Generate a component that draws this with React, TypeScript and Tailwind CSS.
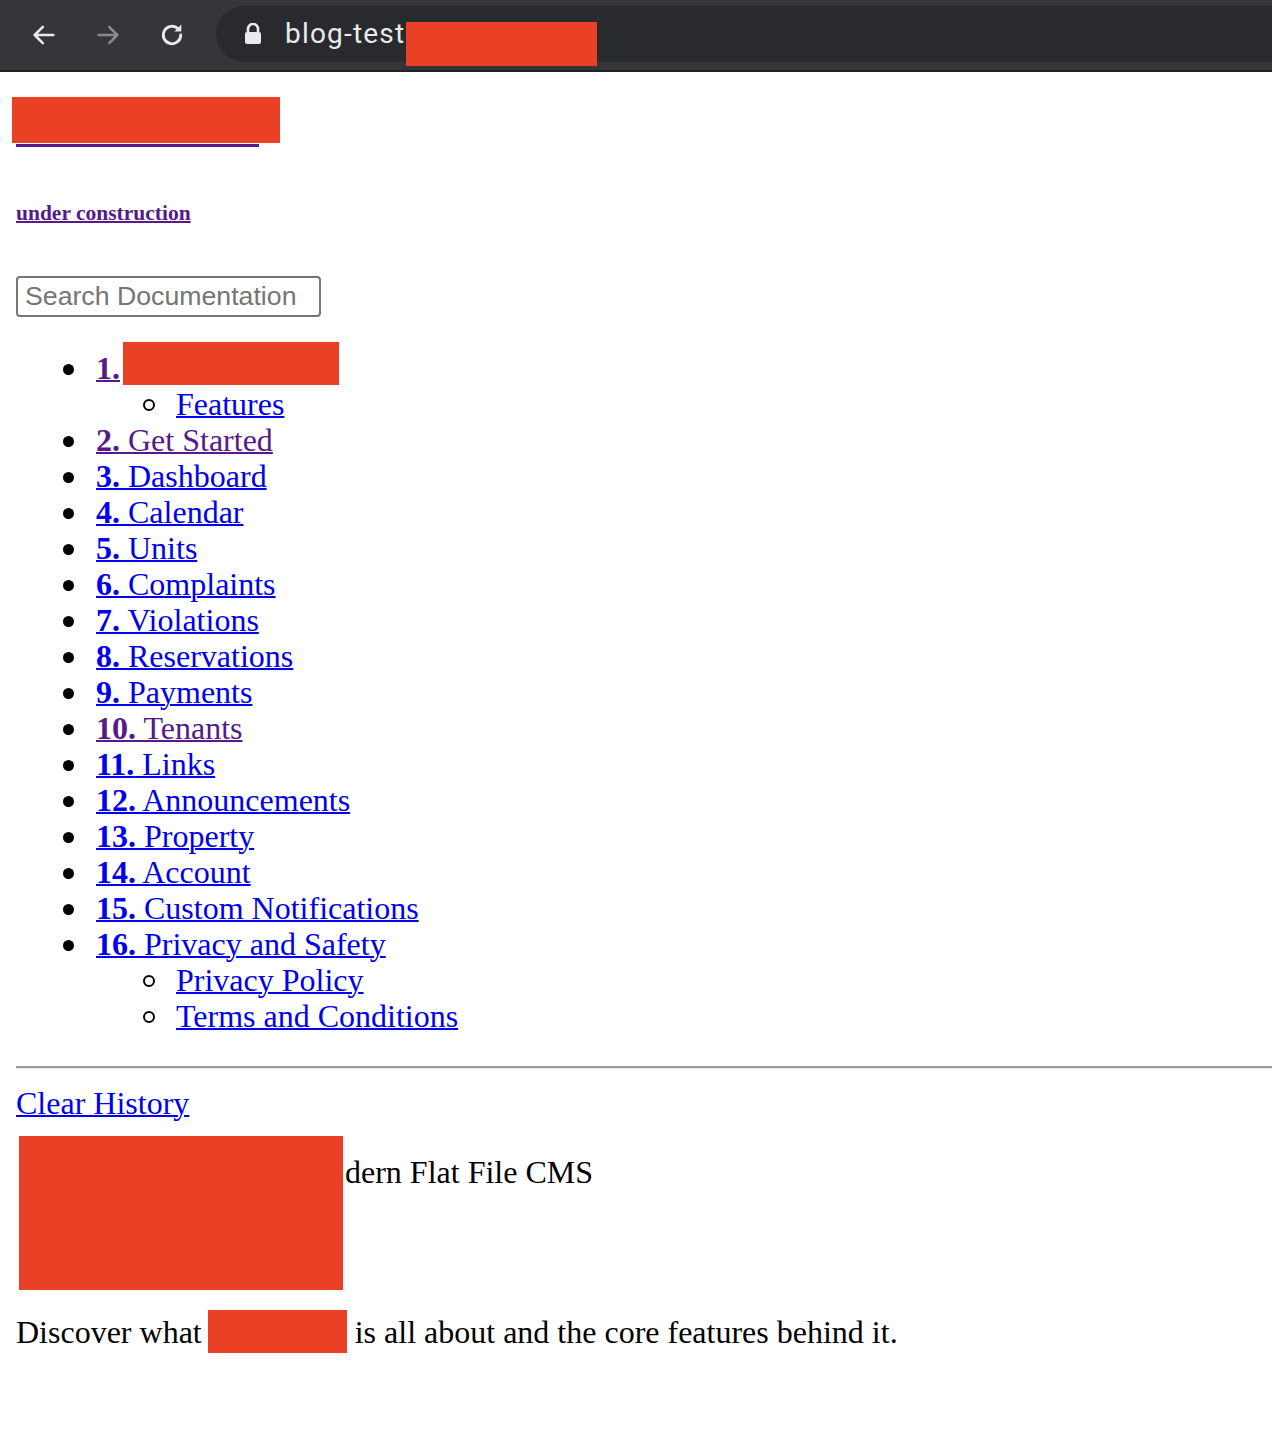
import React from "react"

const red = "bg-[#ea4126]"

const items: { num: string; label: string; visited?: boolean; redacted?: boolean; children?: string[] }[] = [
  { num: "1.", label: "", visited: true, redacted: true, children: ["Features"] },
  { num: "2.", label: "Get Started", visited: true },
  { num: "3.", label: "Dashboard" },
  { num: "4.", label: "Calendar" },
  { num: "5.", label: "Units" },
  { num: "6.", label: "Complaints" },
  { num: "7.", label: "Violations" },
  { num: "8.", label: "Reservations" },
  { num: "9.", label: "Payments" },
  { num: "10.", label: "Tenants", visited: true },
  { num: "11.", label: "Links" },
  { num: "12.", label: "Announcements" },
  { num: "13.", label: "Property" },
  { num: "14.", label: "Account" },
  { num: "15.", label: "Custom Notifications" },
  { num: "16.", label: "Privacy and Safety", children: ["Privacy Policy", "Terms and Conditions"] },
]

function BrowserBar() {
  return (
    <div className="h-[72px] bg-[#35363a] border-b-2 border-[#202124] flex items-center font-['Roboto',sans-serif]">
      <div className="flex items-center gap-[36px] pl-[30px] pr-[30px]">
        <svg width="28" height="28" viewBox="0 0 24 24" fill="none" stroke="#e8eaed" strokeWidth="2.2" strokeLinecap="round" strokeLinejoin="round">
          <path d="M20 12H4M11 5l-7 7 7 7" />
        </svg>
        <svg width="28" height="28" viewBox="0 0 24 24" fill="none" stroke="#8a8b8f" strokeWidth="2.2" strokeLinecap="round" strokeLinejoin="round">
          <path d="M4 12h16M13 5l7 7-7 7" />
        </svg>
        <svg width="28" height="28" viewBox="0 0 24 24" fill="none" stroke="#e8eaed" strokeWidth="2.4" strokeLinecap="round">
          <path d="M19.5 12a7.5 7.5 0 1 1-2.2-5.3" />
          <path d="M20 3v6h-6z" fill="#e8eaed" stroke="none" />
        </svg>
      </div>
      <div className="flex-1 h-[56px] mt-[-2px] bg-[#292a2d] rounded-l-full flex items-center pl-[27px]">
        <svg width="20" height="22" viewBox="0 0 20 22" className="mr-[22px]">
          <path d="M5 9V6a5 5 0 0 1 10 0v3" fill="none" stroke="#e8eaed" strokeWidth="2.6" />
          <rect x="2" y="9" width="16" height="12" rx="2" fill="#e8eaed" />
        </svg>
        <span className="text-[#e8eaed] text-[28px] leading-none tracking-[1.2px]">blog-test</span>
        <div className={`${red} w-[191px] h-[44px] mt-[20px] ml-[1px]`} />
      </div>
    </div>
  )
}

function Disc() {
  return <span className="absolute left-[-33px] top-[14px] w-[11px] h-[11px] rounded-full bg-black" />
}

function Circle() {
  return <span className="absolute left-[-33px] top-[13px] w-[12px] h-[12px] rounded-full border-2 border-black" />
}

export default function App() {
  return (
    <div className="min-h-[1442px] bg-white text-black font-['Liberation_Serif',serif] overflow-hidden">
      <BrowserBar />
      <div className="pl-4">
        {/* title */}
        <div className="pt-[25px]">
          <div className={`${red} w-[268px] h-[46px] ml-[-4px]`} />
          <div className="w-[243px] h-[3px] mt-[1px] bg-[#551a8b]" />
        </div>

        <h6 className="mt-[53px] text-[21.5px] leading-[26px] font-bold">
          <a href="#" className="text-[#551a8b] underline decoration-2">under construction</a>
        </h6>

        <input
          type="text"
          placeholder="Search Documentation"
          className="mt-[50px] block w-[305px] h-[41px] border-2 border-[#767676] rounded-[4px] px-[7px] text-[26.7px] font-['Liberation_Sans',Arial,sans-serif] placeholder:text-[#757575] outline-none"
        />

        <ul className="mt-[33px] mb-[32px] pl-[80px] text-[32px] leading-[36px]">
          {items.map((it) => (
            <li key={it.num} className="relative">
              <Disc />
              <a
                href="#"
                className={`underline decoration-2 ${it.visited ? "text-[#551a8b]" : "text-[#0000ee]"}`}
              >
                <b>{it.num}</b>
                {it.redacted ? (
                  <span className="relative inline-block w-[216px] h-[36px] align-top ml-[3px]">
                    <span className={`${red} absolute left-0 top-[-8px] w-[216px] h-[43px]`} />
                  </span>
                ) : (
                  " " + it.label
                )}
              </a>
              {it.children && (
                <ul className="pl-[80px]">
                  {it.children.map((c) => (
                    <li key={c} className="relative">
                      <Circle />
                      <a href="#" className="text-[#0000ee] underline decoration-2">{c}</a>
                    </li>
                  ))}
                </ul>
              )}
            </li>
          ))}
        </ul>

        <div className="h-[3px] border-t-2 border-[#9a9a9a] border-b border-b-[#e8e8e8]" />

        <div className="mt-[16px] text-[32px] leading-[36px]">
          <a href="#" className="text-[#0000ee] underline decoration-2">Clear History</a>
        </div>

        <div className="flex mt-[15px]">
          <div className={`${red} w-[324px] h-[154px] ml-[3px] shrink-0`} />
          <div className="text-[32px] leading-[36px] mt-[18px] ml-[2px]">dern Flat File CMS</div>
        </div>

        <p className="mt-[20px] text-[32px] leading-[36px] flex items-center">
          <span>Discover what</span>
          <span className={`${red} inline-block w-[139px] h-[43px] ml-[6px] mr-[8px]`} />
          <span>is all about and the core features behind it.</span>
        </p>
      </div>
    </div>
  )
}
